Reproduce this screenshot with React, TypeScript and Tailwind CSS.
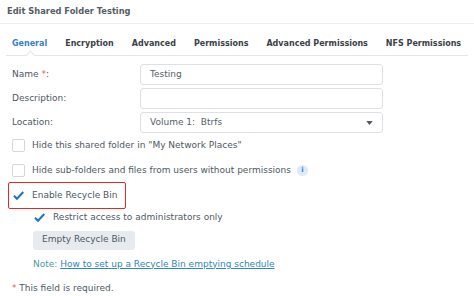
function Box({ checked }: { checked?: boolean }) {
  return (
    <span className="w-[13px] h-[13px] shrink-0 rounded-[2px] border border-[#d3d7dc] bg-white flex items-center justify-center">
      {checked && (
        <svg viewBox="0 0 12 12" className="w-[12px] h-[12px]">
          <path d="M1.8 6.2 L4.6 9 L10.4 2.8" fill="none" stroke="#1f6fc5" strokeWidth="1.8" />
        </svg>
      )}
    </span>
  );
}

function Check({ checked, children }: { checked?: boolean; children: React.ReactNode }) {
  return (
    <div className="flex items-center gap-[7px] whitespace-nowrap">
      {checked ? (
        <svg viewBox="0 0 12 12" className="w-[13px] h-[13px] shrink-0">
          <path d="M1.8 6.2 L4.6 9 L10.4 2.8" fill="none" stroke="#1f6fc5" strokeWidth="1.8" />
        </svg>
      ) : (
        <Box />
      )}
      <span>{children}</span>
    </div>
  );
}

const tabs = ["General", "Encryption", "Advanced", "Permissions", "Advanced Permissions", "NFS Permissions"];

export default function App() {
  return (
    <div className="w-[474px] h-[296px] overflow-hidden bg-white text-[#4e5863] text-[9px]" style={{ fontFamily: '"DejaVu Sans", Verdana, sans-serif' }}>
      <div className="h-[24px] pl-[7px] flex items-center border-b border-[#eceef0] font-bold text-[#555d66] text-[8.3px]">
        Edit Shared Folder Testing
      </div>

      <div className="relative mx-[6px] h-[32px] flex items-end pb-[5px] gap-[18px] pl-[6px] border-b border-[#e3e6e9] font-bold text-[#3b4148] text-[8px] whitespace-nowrap">
        {tabs.map((t, i) => (
          <span key={t} className={i === 0 ? "text-[#3a80c6]" : ""}>{t}</span>
        ))}
        <span className="absolute left-[21px] bottom-[-4px] w-[7px] h-[7px] rotate-45 bg-white border-l border-t border-[#e3e6e9]" />
      </div>

      <div className="pl-[12px] pt-[8px] flex flex-col">
        <div className="grid grid-cols-[128px_243px] gap-y-[3px] items-center">
          <span>Name <span className="text-[#e0605a]">*</span>:</span>
          <div className="h-[21px] rounded-[3px] border border-[#dde1e5] flex items-center px-[9px] text-[#55606a]">Testing</div>
          <span>Description:</span>
          <div className="h-[21px] rounded-[3px] border border-[#dde1e5]" />
          <span>Location:</span>
          <div className="h-[21px] rounded-[3px] border border-[#dde1e5] flex items-center justify-between px-[9px] text-[#55606a]">
            <span>Volume 1:&nbsp; Btrfs</span>
            <svg viewBox="0 0 8 5" className="w-[7px] h-[4px]"><path d="M0 0 H8 L4 5 Z" fill="#555" /></svg>
          </div>
        </div>

        <div className="mt-[6px] flex flex-col gap-[11px]">
          <Check>Hide this shared folder in "My Network Places"</Check>
          <div className="flex items-center gap-[6px]">
            <Check>Hide sub-folders and files from users without permissions</Check>
            <span className="w-[11px] h-[11px] rounded-full bg-[#dcebfa] text-[#3a80c6] text-[7px] font-bold flex items-center justify-center">i</span>
          </div>
        </div>

        <div className="mt-[5px] -ml-[4px] w-[118px] h-[27px] border-[1.5px] border-[#e12a23] rounded-[2px] flex items-center pl-[3px]">
          <Check checked>Enable Recycle Bin</Check>
        </div>

        <div className="pl-[21px] mt-[2px] flex flex-col items-start">
          <Check checked>Restrict access to administrators only</Check>
          <div className="mt-[6px] h-[19px] px-[9px] rounded-[3px] bg-[#e7ebef] flex items-center text-[#4e5863]">Empty Recycle Bin</div>
          <div className="mt-[8px] text-[#4a9aa6]">
            Note: <span className="underline text-[#2f86c0]">How to set up a Recycle Bin emptying schedule</span>
          </div>
        </div>

        <div className="mt-[11px]"><span className="text-[#e0605a]">*</span> This field is required.</div>
      </div>
    </div>
  );
}
